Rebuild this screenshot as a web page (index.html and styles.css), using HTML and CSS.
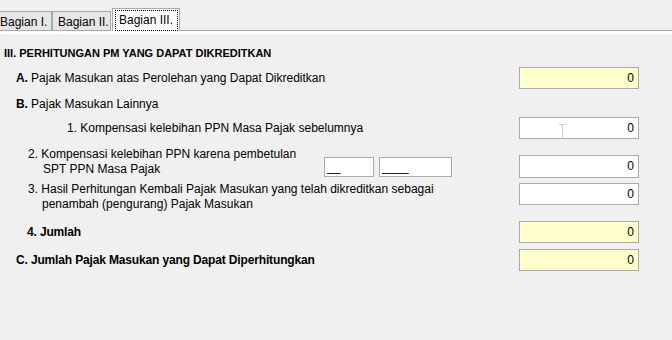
FILE: index.html
```html
<!DOCTYPE html>
<html>
<head>
<meta charset="utf-8">
<link rel="stylesheet" href="styles.css">
</head>
<body>
<div class="tabbar">
  <div class="tab tab1">Bagian I.</div>
  <div class="tab tab2">Bagian II.</div>
  <div class="tab tab3"><span class="focus">Bagian III.</span></div>
  <div class="tabfill"></div>
</div>
<div class="band"></div>
<div class="content">
  <div class="head">III. PERHITUNGAN PM YANG DAPAT DIKREDITKAN</div>

  <div class="row row-a">
    <div class="label lv1"><b>A.</b> Pajak Masukan atas Perolehan yang Dapat Dikreditkan</div>
    <div class="field yellow">0</div>
  </div>

  <div class="row row-b">
    <div class="label lv1"><b>B.</b> Pajak Masukan Lainnya</div>
  </div>

  <div class="row row-1">
    <div class="label lv3">1. Kompensasi kelebihan PPN Masa Pajak sebelumnya</div>
    <div class="field white has-cursor">0<svg class="cursor" width="8" height="16" viewBox="0 0 8 16"><path d="M0 0.5h7M3.5 0.5v15" stroke="#d4d4d4" stroke-width="1" fill="none"/></svg></div>
  </div>

  <div class="row row-2">
    <div class="label lv2 multi lbl2">2. Kompensasi kelebihan PPN karena pembetulan<span class="cont">SPT PPN Masa Pajak</span></div>
    <div class="small s1">__</div>
    <div class="small s2">____</div>
    <div class="field white f2">0</div>
  </div>

  <div class="row row-3">
    <div class="label lv2 multi">3. Hasil Perhitungan Kembali Pajak Masukan yang telah dikreditkan sebagai<span class="cont c3">penambah (pengurang) Pajak Masukan</span></div>
    <div class="field white f3">0</div>
  </div>

  <div class="row row-4">
    <div class="label lv2b"><b>4. Jumlah</b></div>
    <div class="field yellow">0</div>
  </div>

  <div class="row row-c">
    <div class="label lv1"><b>C. Jumlah Pajak Masukan yang Dapat Diperhitungkan</b></div>
    <div class="field yellow">0</div>
  </div>
</div>
</body>
</html>
```

FILE: styles.css
```css
html, body {
  margin: 0;
  padding: 0;
}
body {
  width: 672px;
  height: 340px;
  overflow: hidden;
  background: #f0f0f0;
  font-family: "Liberation Sans", Arial, sans-serif;
  font-size: 12px;
  color: #000;
}
b {
  letter-spacing: -0.15px;
}

/* tabs */
.tabbar {
  display: flex;
  align-items: flex-end;
  height: 31px;
}
.tab {
  box-sizing: border-box;
  flex: none;
  height: 20px;
  border: 1px solid #a9a9a9;
  background: #e6e6e6;
  padding: 3px 0 0 5px;
  line-height: 14px;
  white-space: nowrap;
  overflow: hidden;
}
.tab1 {
  margin-left: -6px;
  width: 58px;
}
.tab2 {
  width: 59px;
}
.tab3 {
  margin-left: 1px;
  width: 68px;
  height: 23px;
  border-bottom: none;
  background: #fff;
  padding: 0;
}
.focus {
  display: block;
  box-sizing: border-box;
  margin: 1px 0 0 2px;
  width: 63px;
  height: 21px;
  border: 1px dotted #000;
  padding: 2px 0 0 3px;
  line-height: 14px;
}
.tabfill {
  flex: 1;
  height: 1px;
  background: #a9a9a9;
}
.band {
  height: 3px;
  background: #fff;
}

/* content */
.head {
  margin-top: 10px;
  height: 18px;
  line-height: 18px;
  padding-left: 4px;
  font-weight: bold;
  font-size: 11px;
}
.row {
  display: flex;
  align-items: center;
  padding-right: 33px;
  height: 22px;
  line-height: 22px;
}
.label {
  white-space: nowrap;
}
.lv1 { padding-left: 16px; }
.lv2 { padding-left: 28px; }
.lv2b { padding-left: 27px; }
.lv3 { padding-left: 67px; }

.row-a { margin-top: 5px; }
.row-b { margin-top: 6px; height: 18px; line-height: 18px; }
.row-1 { margin-top: 4px; }
.row-2 {
  margin-top: 8px;
  height: auto;
  align-items: flex-start;
  line-height: normal;
}
.row-3 {
  margin-top: 4px;
  height: auto;
  align-items: flex-start;
  line-height: normal;
}
.row-4 { margin-top: 9px; }
.row-c { margin-top: 6px; }

.multi {
  line-height: 15px;
}
.cont {
  display: block;
  padding-left: 15px;
}
.cont.c3 {
  padding-left: 14px;
}
.lbl2 {
  box-sizing: border-box;
  width: 324px;
  flex: none;
}

.field {
  box-sizing: border-box;
  margin-left: auto;
  flex: none;
  width: 120px;
  height: 22px;
  border: 1px solid #ababab;
  padding-right: 4px;
  text-align: right;
  line-height: 20px;
}
.yellow { background: #ffffcc; }
.white { background: #fff; }
.f2 {
  margin-top: 8px;
  height: 23px;
  line-height: 21px;
}
.f3 {
  margin-top: 1px;
}
.small {
  box-sizing: border-box;
  flex: none;
  margin-top: 10px;
  height: 20px;
  border: 1px solid #ababab;
  background: #fff;
  padding-left: 2px;
  line-height: 18px;
}
.s1 { width: 50px; }
.s2 { width: 73px; margin-left: 5px; }

.has-cursor {
  position: relative;
}
.cursor {
  position: absolute;
  left: 39px;
  top: 6px;
}
```
